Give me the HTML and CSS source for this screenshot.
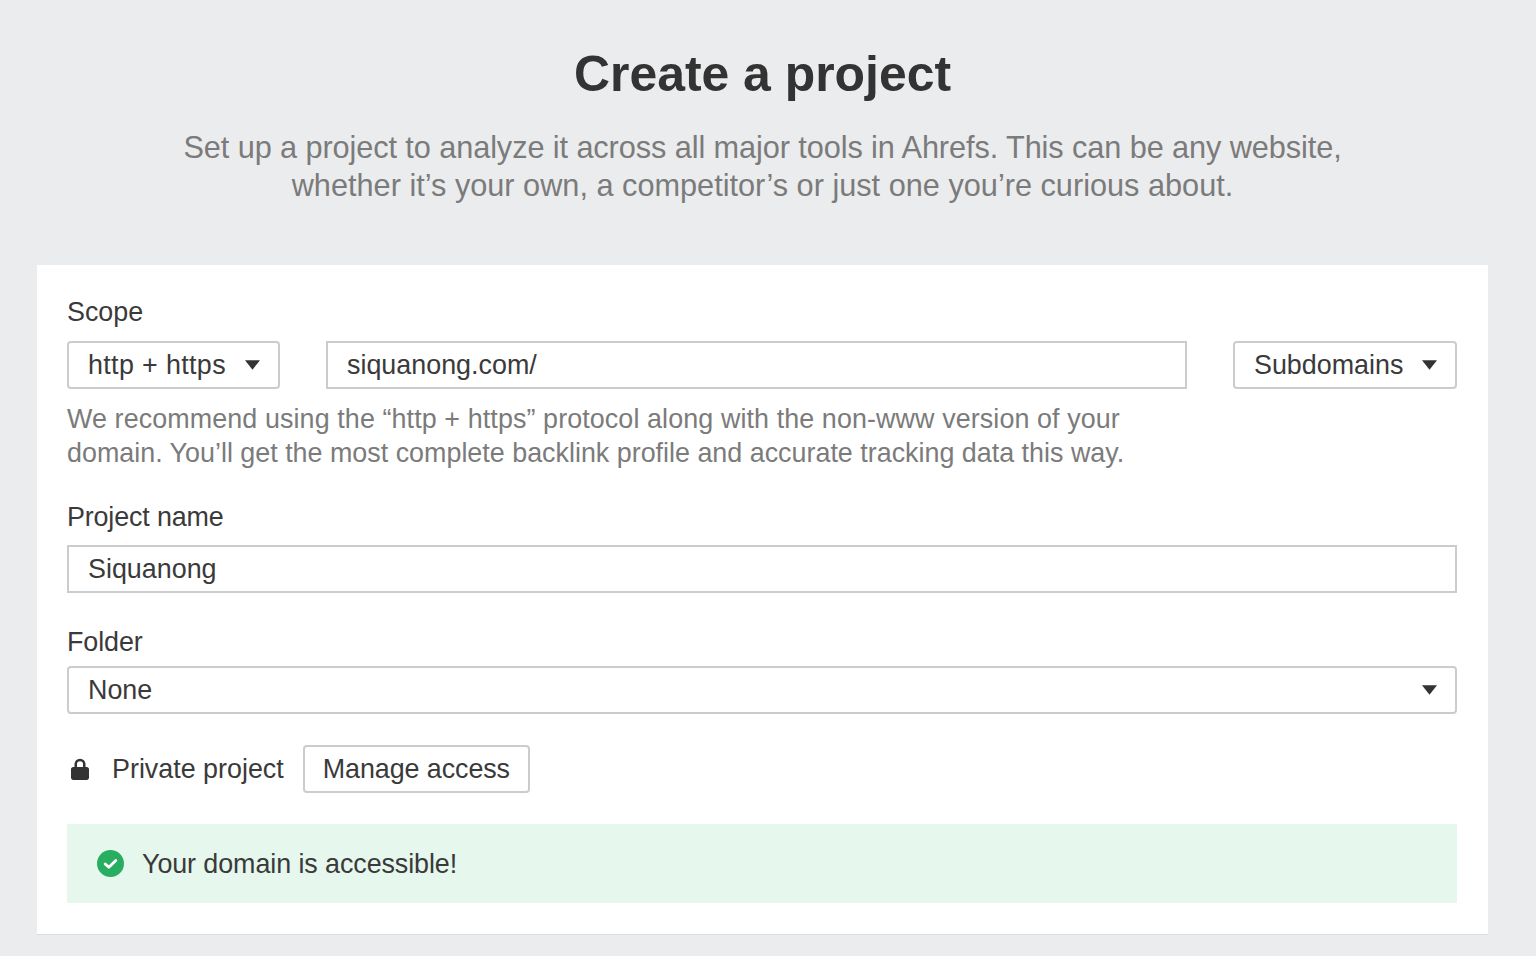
FILE: index.html
```html
<!DOCTYPE html>
<html lang="en">
<head>
<meta charset="utf-8">
<title>Create a project</title>
<link rel="stylesheet" href="styles.css">
</head>
<body>
<main class="page">
  <header class="intro">
    <h1 class="title">Create a project</h1>
    <p class="lead"><span class="lead-first">Set up a project to analyze it across all major tools in Ahrefs. This can be any website,</span><br>whether it’s your own, a competitor’s or just one you’re curious about.</p>
  </header>
  <section class="card">
    <div class="label label-scope">Scope</div>
    <div class="scope-row">
      <div class="control select select-protocol"><span class="protocol-text">http + https</span><svg class="caret" viewBox="0 0 16 10"><path d="M0 0h16L8 10z"/></svg></div>
      <div class="control input input-url">siquanong.com/</div>
      <div class="control select select-mode"><span>Subdomains</span><svg class="caret" viewBox="0 0 16 10"><path d="M0 0h16L8 10z"/></svg></div>
    </div>
    <p class="hint"><span class="hint-first">We recommend using the “http + https” protocol along with the non-www version of your</span><br>domain. You’ll get the most complete backlink profile and accurate tracking data this way.</p>
    <div class="label label-name">Project name</div>
    <div class="control input">Siquanong</div>
    <div class="label label-folder">Folder</div>
    <div class="control select select-folder"><span>None</span><svg class="caret" viewBox="0 0 16 10"><path d="M0 0h16L8 10z"/></svg></div>
    <div class="access-row">
      <svg class="lock" viewBox="0 0 18 22"><path d="M3.500 9V6.200a5.500 5.500 0 0 1 11 0V9h1.300c1.200 0 2.200 1 2.200 2.200v8.600c0 1.200-1 2.200-2.200 2.200H2.200C1 22 0 21 0 19.800v-8.600C0 10 1 9 2.200 9zM6 9h6V6.200a3 3 0 0 0-6 0z"/></svg>
      <span class="private">Private project</span>
      <div class="control button">Manage access</div>
    </div>
    <div class="notice">
      <svg class="check" viewBox="0 0 28 28"><circle cx="14" cy="14" r="14"/><path class="tick" d="M8.500 14.500l3.800 3.400 7.200-7"/></svg>
      <span class="notice-text">Your domain is accessible!</span>
    </div>
  </section>
</main>
</body>
</html>
```
FILE: styles.css
```css
* { box-sizing: border-box; }
html, body { margin: 0; height: 100%; }
body {
  background: #ebecee;
  color: #3a3a3a;
  font-family: "Liberation Sans", Arial, sans-serif;
  font-size: 26.88px;
  line-height: 34px;
  overflow: hidden;
}
.page { width: 1451px; margin-left: 37px; }
.intro { text-align: center; padding-top: 44px; height: 265px; }
.title { margin: 0; font-size: 49.9px; line-height: 60px; font-weight: 700; color: #333; }
.lead { margin: 25px 0 0; font-size: 30.7px; line-height: 38px; color: #7b7b7b; }
.lead-first { letter-spacing: -0.09px; }
.card {
  background: #fff;
  height: 670px;
  padding: 30px 31px 0 30px;
  border-bottom: 1px solid #dcdde0;
}
.label { line-height: 34px; }
.scope-row { display: flex; gap: 46px; margin-top: 12px; }
.control {
  height: 48px;
  border: 2px solid #ccc;
  padding: 0 19px;
  display: flex;
  align-items: center;
  background: #fff;
  white-space: nowrap;
}
.select { border-radius: 4px; justify-content: space-between; padding-right: 18px; }
.select-protocol { width: 213px; flex: none; }
.protocol-text { letter-spacing: 0.35px; }
.select-mode { width: 224px; flex: none; }
.input-url { flex: 1; }
.caret { width: 15px; height: 10px; fill: #333; flex: none; }
.hint { margin: 13px 0 0; color: #7b7b7b; line-height: 34px; }
.hint-first { letter-spacing: 0.1px; }
.label-name { margin-top: 30px; margin-bottom: 11px; letter-spacing: -0.15px; }
.label-folder { margin-top: 32px; margin-bottom: 7px; letter-spacing: -0.1px; }
.access-row { display: flex; align-items: center; margin-top: 31px; }
.lock { width: 18px; height: 22px; fill: #333; margin-left: 4px; flex: none; }
.private { margin-left: 23px; }
.button { border-radius: 4px; margin-left: 19px; padding: 0 18px; letter-spacing: -0.08px; }
.notice {
  margin-top: 31px;
  height: 79px;
  background: #e6f7ee;
  display: flex;
  align-items: center;
  padding-left: 30px;
}
.check { width: 27px; height: 27px; flex: none; margin-right: 18px; }
.check circle { fill: #27ae60; }
.tick { fill: none; stroke: #fff; stroke-width: 3; stroke-linecap: round; stroke-linejoin: round; }
.notice-text { letter-spacing: -0.08px; }
```
